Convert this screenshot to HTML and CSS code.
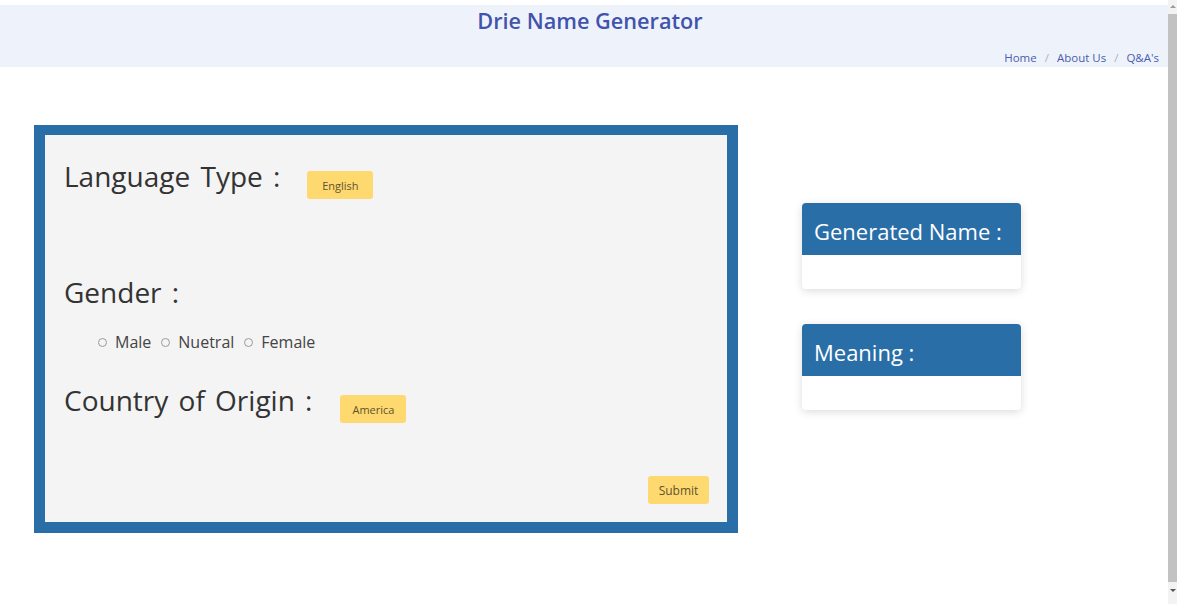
FILE: index.html
```html
<!DOCTYPE html>
<html lang="en">
<head>
<meta charset="utf-8">
<title>Drie Name Generator</title>
<link rel="stylesheet" href="styles.css">
</head>
<body>
<div class="page">
  <header class="topbar">
    <h1 class="brand">Drie Name Generator</h1>
    <nav class="crumbs">
      <a href="#">Home</a><span class="sep">/</span><a href="#">About Us</a><span class="sep">/</span><a href="#">Q&amp;A's</a>
    </nav>
  </header>
  <main class="layout">
    <form class="panel">
      <div class="field-row row-lang">
        <span class="label">Language Type :</span>
        <button type="button" class="chip">English</button>
      </div>
      <div class="field-row row-gender">
        <span class="label">Gender :</span>
      </div>
      <div class="radios">
        <label class="radio"><input type="radio" name="g"><span>Male</span></label>
        <label class="radio"><input type="radio" name="g"><span>Nuetral</span></label>
        <label class="radio"><input type="radio" name="g"><span>Female</span></label>
      </div>
      <div class="field-row row-country">
        <span class="label">Country of Origin :</span>
        <button type="button" class="chip">America</button>
      </div>
      <div class="actions">
        <button type="button" class="chip submit">Submit</button>
      </div>
    </form>
    <aside class="results">
      <section class="card">
        <h2 class="card-head">Generated Name :</h2>
        <div class="card-body"></div>
      </section>
      <section class="card">
        <h2 class="card-head">Meaning :</h2>
        <div class="card-body"></div>
      </section>
    </aside>
  </main>
</div>
<div class="scrollbar" aria-hidden="true">
  <span class="sb-arrow sb-up"></span>
  <span class="sb-thumb"></span>
  <span class="sb-arrow sb-down"></span>
</div>
</body>
</html>
```
FILE: styles.css
```css
body {
  margin: 0;
  padding-right: 9px;
  background: #ffffff;
  font-family: "Open Sans", "Noto Sans", sans-serif;
  color: #333;
}

.page {
  padding-top: 5px;
  min-height: 590px;
}

/* imitation of the window scrollbar */
.scrollbar {
  position: fixed;
  top: 0;
  right: 0;
  bottom: 0;
  width: 9px;
  background: #f3f3f3;
  display: flex;
  flex-direction: column;
  align-items: center;
}

.sb-arrow {
  width: 0;
  height: 0;
  border-left: 3px solid transparent;
  border-right: 3px solid transparent;
}

.sb-up {
  margin-top: 5px;
  border-bottom: 3px solid #9a9a9a;
}

.sb-thumb {
  width: 9px;
  flex: 1;
  background: #c2c2c2;
  margin: 6px 0 7px;
}

.sb-down {
  margin-bottom: 12px;
  border-top: 3px solid #555;
}

.topbar {
  background: #eef3fb;
  height: 62px;
  display: flex;
  flex-direction: column;
  justify-content: space-between;
}

.brand {
  margin: 0;
  padding: 2px 0 0 12px;
  text-align: center;
  font-size: 21.7px;
  font-weight: 600;
  line-height: 28px;
  color: #4253ad;
}

.crumbs {
  align-self: flex-end;
  padding: 0 9px 1px 0;
  font-size: 11.5px;
  line-height: 16px;
}

.crumbs a {
  color: #4a5cb0;
  text-decoration: none;
}

.crumbs .sep {
  color: #aab0c4;
  margin: 0 8px;
}

.layout {
  display: flex;
  align-items: flex-start;
  padding: 58px 0 0 34px;
  gap: 64px;
}

.panel {
  box-sizing: border-box;
  width: 704px;
  border: 11px solid #2a6ea7;
  border-top-width: 10px;
  background: #f4f4f4;
  padding: 24px 0 18px 19px;
  display: flex;
  flex-direction: column;
}

.field-row {
  display: flex;
  align-items: flex-start;
  height: 40px;
}

.label {
  font-size: 28px;
  line-height: 34px;
  word-spacing: 3px;
  color: #333;
}

.chip {
  font-family: inherit;
  background: #fed96f;
  border: none;
  border-radius: 3px;
  height: 28px;
  width: 66px;
  padding: 0;
  font-size: 11px;
  color: #5e5330;
  margin-top: 12px;
}

.row-lang .chip {
  margin-left: 27px;
}

.row-gender {
  margin-top: 76px;
  height: 34px;
}

.radios {
  display: flex;
  align-items: center;
  height: 24px;
  margin-top: 21px;
  padding-left: 34px;
}

.radio {
  display: flex;
  align-items: center;
  font-size: 16px;
  color: #444;
  margin-right: 10px;
}

.radio input {
  appearance: none;
  -webkit-appearance: none;
  width: 9px;
  height: 9px;
  border: 1px solid #9a9a9a;
  border-radius: 50%;
  margin: 0 8px 0 0;
  background: #f4f4f4;
}

.row-country {
  margin-top: 29px;
}

.row-country .chip {
  margin-left: 28px;
}

.actions {
  display: flex;
  justify-content: flex-end;
  padding-right: 18px;
  margin-top: 53px;
}

.submit {
  margin-top: 0;
  width: 61px;
  font-size: 12px;
}

.results {
  display: flex;
  flex-direction: column;
  gap: 35px;
  padding-top: 78px;
}

.card {
  width: 219px;
  border-radius: 4px;
  background: #fff;
  box-shadow: 0 2px 8px rgba(0, 0, 0, 0.14);
  overflow: hidden;
}

.card-head {
  margin: 0;
  height: 52px;
  background: #2a6ea7;
  color: #fff;
  font-size: 22px;
  font-weight: 400;
  line-height: 56px;
  padding-left: 12px;
}

.card-body {
  height: 34px;
}
```
